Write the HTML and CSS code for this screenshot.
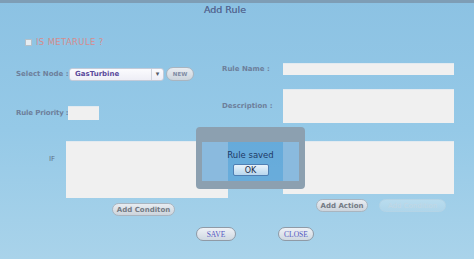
FILE: index.html
```html
<!DOCTYPE html>
<html>
<head>
<meta charset="utf-8">
<link rel="stylesheet" href="styles.css">
</head>
<body>
<div class="page">
  <div class="topbar"></div>
  <div class="title">Add Rule</div>
  <div class="meta">
    <span class="checkbox"></span>
    <span class="meta-label">IS METARULE ?</span>
  </div>
  <div class="upper">
    <div class="left-col">
      <div class="field-row select-row">
        <span class="label">Select Node :</span>
        <div class="select">
          <span class="select-text">GasTurbine</span>
          <span class="select-arrow">▾</span>
        </div>
        <span class="btn btn-new">NEW</span>
      </div>
      <div class="field-row priority-row">
        <span class="label">Rule Priority :</span>
        <span class="input priority"></span>
      </div>
    </div>
    <div class="right-col">
      <div class="field-row name-row">
        <span class="label rlabel">Rule Name :</span>
        <span class="input name"></span>
      </div>
      <div class="field-row desc-row">
        <span class="label rlabel">Description :</span>
        <span class="input desc"></span>
      </div>
    </div>
  </div>
  <div class="logic">
    <span class="if-label">IF</span>
    <div class="if-col">
      <span class="input area-if"></span>
      <div class="btn-row left-btns">
        <span class="btn btn-add">Add Conditon</span>
      </div>
    </div>
    <div class="then-col">
      <span class="input area-then"></span>
      <div class="btn-row right-btns">
        <span class="btn btn-add">Add Action</span>
        <span class="btn btn-add disabled">Add Condition</span>
      </div>
    </div>
  </div>
  <div class="actions">
    <span class="btn btn-main">SAVE</span>
    <span class="btn btn-main">CLOSE</span>
  </div>
  <div class="dialog">
    <div class="dialog-inner">
      <div class="dialog-msg">Rule saved</div>
      <span class="btn-ok">OK</span>
    </div>
  </div>
</div>
</body>
</html>
```
FILE: styles.css
```css
* { box-sizing: border-box; }
html, body { margin: 0; padding: 0; }
body {
  width: 474px;
  height: 259px;
  overflow: hidden;
  font-family: "DejaVu Sans", Verdana, sans-serif;
}
.page {
  position: relative;
  width: 474px;
  height: 259px;
  background: linear-gradient(to bottom, #8cc2e3 0%, #95c9e7 50%, #a9d3ea 100%);
}
.topbar {
  height: 3px;
  background: #7e9db5;
}
.title {
  height: 14px;
  line-height: 14px;
  text-align: center;
  font-size: 9.5px;
  color: #566a94;
  padding-right: 24px;
  text-shadow: 0 0 0.3px #566a94;
}
.meta {
  display: flex;
  align-items: center;
  height: 12px;
  margin-top: 19px;
  padding-left: 25px;
}
.checkbox {
  width: 7px;
  height: 7px;
  background: #e6ecf1;
  border: 1px solid #b4c0c9;
}
.meta-label {
  margin-left: 4px;
  font-size: 8.5px;
  color: #d48d8e;
  letter-spacing: 0.35px;
}
.upper {
  display: flex;
  margin-top: 15px;
}
.left-col {
  width: 222px;
  padding-left: 16px;
}
.right-col {
  padding-left: 0;
}
.field-row {
  display: flex;
  align-items: center;
}
.label {
  font-size: 7px;
  font-weight: bold;
  color: #6d7f9b;
  white-space: nowrap;
}
.select-row {
  margin-top: 4px;
  height: 14px;
}
.select-row .label { width: 53px; }
.select {
  width: 95px;
  height: 13px;
  border-radius: 3px;
  background: linear-gradient(#fbfbfe, #eeeef6);
  border: 1px solid #c3cbd9;
  display: flex;
  align-items: center;
  position: relative;
}
.select-text {
  flex: 1;
  padding-left: 5px;
  font-size: 7px;
  font-weight: bold;
  color: #5a4a9c;
}
.select-arrow {
  width: 12px;
  height: 100%;
  border-left: 1px solid #d0d4de;
  font-size: 7px;
  color: #555a66;
  text-align: center;
  line-height: 11px;
}
.btn {
  display: inline-flex;
  align-items: center;
  justify-content: center;
  border-radius: 7px;
  background: linear-gradient(#e8ecf1, #ccd4dc);
  border: 1px solid #a9b5c0;
  font-size: 7px;
  font-weight: bold;
  color: #737a84;
  white-space: nowrap;
}
.btn-new {
  margin-left: 2px;
  width: 28px;
  height: 14px;
  font-size: 5.5px;
  color: #7d8aa3;
}
.priority-row {
  margin-top: 25px;
  height: 14px;
}
.priority-row .label { width: 52px; letter-spacing: -0.15px; }
.input {
  display: block;
  background: #f0f0f0;
  border-top: 1px solid #e2eaf0;
}
.priority {
  width: 31px;
  height: 14px;
}
.name-row { height: 12px; }
.rlabel { width: 61px; }
.name {
  width: 171px;
  height: 12px;
}
.desc-row {
  margin-top: 14px;
  height: 34px;
}
.desc {
  width: 171px;
  height: 34px;
}
.logic {
  display: flex;
  margin-top: 18px;
}
.if-label {
  width: 66px;
  padding-right: 11px;
  text-align: right;
  font-size: 7px;
  color: #5f6f88;
  padding-top: 14px;
}
.if-col {
  width: 162px;
}
.area-if {
  width: 162px;
  height: 57px;
}
.then-col {
  margin-left: 55px;
}
.area-then {
  width: 171px;
  height: 53px;
}
.btn-row {
  display: flex;
  margin-top: 5px;
}
.left-btns { padding-left: 46px; }
.right-btns { padding-left: 33px; gap: 11px; }
.btn-add {
  height: 13px;
  padding: 0 6px;
}
.left-btns .btn-add { width: 63px; }
.right-btns .btn-add { width: 52px; }
.right-btns .disabled {
  width: 67px;
  color: #c2d7e4;
  background: linear-gradient(#b9dcee, #aed5ea);
  border-color: #b4d4e6;
  font-weight: normal;
}
.actions {
  display: flex;
  margin-top: 11px;
  padding-left: 196px;
  gap: 42px;
}
.btn-main {
  height: 14px;
  font-family: "Liberation Serif", serif;
  font-size: 7.5px;
  font-weight: normal;
  color: #5458c2;
  background: linear-gradient(#eef1f6, #cfd8e1);
  border-color: #8f9aa6;
}
.btn-main:first-child { width: 40px; }
.btn-main:last-child { width: 36px; }
.dialog {
  position: absolute;
  left: 196px;
  top: 127px;
  width: 109px;
  height: 62px;
  border-radius: 4px;
  border-style: solid;
  border-color: #8ca0b0;
  border-width: 15px 6px 8px 6px;
  background: transparent;
}
.dialog-inner {
  width: 100%;
  height: 100%;
  background: rgba(70, 150, 210, 0.6);
  display: flex;
  flex-direction: column;
  align-items: center;
}
.dialog-msg {
  margin-top: 8px;
  font-size: 8.5px;
  color: #1f3a66;
  line-height: 10px;
}
.btn-ok {
  margin-top: 4px;
  width: 36px;
  height: 12px;
  display: flex;
  align-items: center;
  justify-content: center;
  background: linear-gradient(#e8f3fb, #b7d6ee);
  border: 1px solid #4f7fb3;
  border-radius: 2px;
  font-size: 8px;
  color: #1c2c48;
}
```
